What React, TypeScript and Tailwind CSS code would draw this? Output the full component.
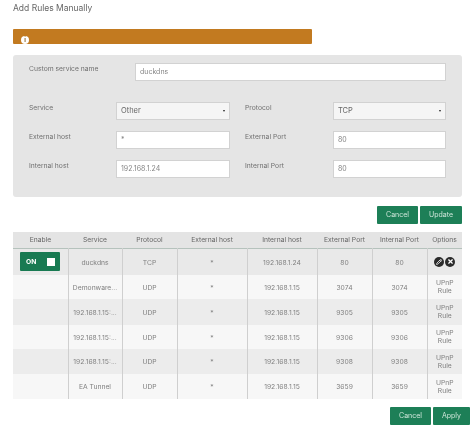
import { Pencil, X } from "lucide-react";

const rows = [
  { service: "duckdns", proto: "TCP", host: "192.168.1.24", ext: "80", int: "80", custom: true, h: "h-[27px]", bg: "bg-[#e9e9e9]" },
  { service: "Demonware...", proto: "UDP", host: "192.168.1.15", ext: "3074", int: "3074", h: "h-[24px]", bg: "bg-[#f7f7f7]" },
  { service: "192.168.1.15:...", proto: "UDP", host: "192.168.1.15", ext: "9305", int: "9305", h: "h-[26px]", bg: "bg-[#ececec]" },
  { service: "192.168.1.15:...", proto: "UDP", host: "192.168.1.15", ext: "9306", int: "9306", h: "h-[24px]", bg: "bg-[#f7f7f7]" },
  { service: "192.168.1.15:...", proto: "UDP", host: "192.168.1.15", ext: "9308", int: "9308", h: "h-[25px]", bg: "bg-[#ececec]" },
  { service: "EA Tunnel", proto: "UDP", host: "192.168.1.15", ext: "3659", int: "3659", h: "h-[25px]", bg: "bg-[#f7f7f7]" },
];

const headers = [
  { label: "Enable", w: "w-[55px]" },
  { label: "Service", w: "w-[54px]" },
  { label: "Protocol", w: "w-[55px]" },
  { label: "External host", w: "w-[70px]" },
  { label: "Internal host", w: "w-[70px]" },
  { label: "External Port", w: "w-[55px]" },
  { label: "Internal Port", w: "w-[55px]" },
  { label: "Options", w: "w-[35px]" },
];

function Field({ value, className }: { value: string; className: string }) {
  return (
    <div className={`h-[18px] flex items-center pl-[4px] bg-white border border-[#d2d2d2] text-[7px] text-[#858585] ${className}`}>
      {value}
    </div>
  );
}

function Select({ value, className }: { value: string; className: string }) {
  return (
    <div className={`h-[18px] flex items-center justify-between px-[4px] bg-[#f5f5f5] border border-[#d2d2d2] text-[7.5px] text-[#666] ${className}`}>
      <span>{value}</span>
      <span className="w-0 h-0 border-x-[1.5px] border-t-[2px] border-x-transparent border-t-[#222]" />
    </div>
  );
}

function Btn({ label, className }: { label: string; className: string }) {
  return (
    <button className={`h-[18px] rounded-[1px] bg-[#1d7f57] text-[7px] text-[#cfe6da] ${className}`}>
      {label}
    </button>
  );
}

const cell = "border-r border-[#cfcfcf] text-center align-middle p-0 pt-[2px]";

export default function App() {
  return (
    <div className="w-[474px] h-[428px] overflow-hidden pl-[13px] pt-[3px] text-[#666] will-change-transform font-['Inter',sans-serif]">
      <h1 className="h-[11px] leading-[11px] text-[8.5px] font-normal text-[#666]">Add Rules Manually</h1>

      <div className="mt-[15px] w-[299px] h-[15px] bg-[#c27a20] rounded-[1px] flex items-end pl-[8px]">
        <div className="w-[8px] h-[8px] rounded-full bg-white flex items-center justify-center text-[6px] font-bold text-[#8a5a18] leading-none">i</div>
      </div>

      <div className="mt-[11px] w-[449px] h-[142px] bg-[#e5e5e5] rounded-[3px] pl-[16px] pr-[16px] pt-[8px] text-[6.75px] text-[#707070]">
        <div className="flex items-center h-[18px]">
          <span className="w-[106px] -mt-[6px]">Custom service name</span>
          <Field value="duckdns" className="w-[311px]" />
        </div>
        <div className="mt-[21px] flex flex-col gap-[11px]">
          <div className="flex items-center">
            <span className="w-[87px] -mt-[5px]">Service</span>
            <Select value="Other" className="w-[114px]" />
            <span className="ml-[15px] w-[88px] -mt-[5px]">Protocol</span>
            <Select value="TCP" className="w-[113px]" />
          </div>
          <div className="flex items-center">
            <span className="w-[87px] -mt-[5px]">External host</span>
            <Field value="*" className="w-[114px]" />
            <span className="ml-[15px] w-[88px] -mt-[5px]">External Port</span>
            <Field value="80" className="w-[113px]" />
          </div>
          <div className="flex items-center">
            <span className="w-[87px] -mt-[6px]">Internal host</span>
            <Field value="192.168.1.24" className="w-[114px]" />
            <span className="ml-[15px] w-[88px] -mt-[6px]">Internal Port</span>
            <Field value="80" className="w-[113px]" />
          </div>
        </div>
      </div>

      <div className="mt-[9px] w-[449px] flex justify-end gap-[2px]">
        <Btn label="Cancel" className="w-[41px]" />
        <Btn label="Update" className="w-[42px]" />
      </div>

      <table className="mt-[8px] w-[449px] table-fixed border-collapse text-[6.75px] text-[#808080]">
        <thead>
          <tr className="h-[16px] bg-[#e4e4e4] border-b border-[#b5c2bc] text-[#666]">
            {headers.map((h) => (
              <th key={h.label} className={`${h.w} font-normal text-center p-0`}>{h.label}</th>
            ))}
          </tr>
        </thead>
        <tbody>
          {rows.map((r, i) => (
            <tr key={i} className={`${r.h} ${r.bg}`}>
              <td className="border-r border-[#cfcfcf] align-middle p-0">
                {r.custom && (
                  <div className="mx-[7px] h-[19px] w-[40px] rounded-[1px] bg-[#187a52] flex items-center justify-between pl-[6px] pr-[5px]">
                    <span className="text-[6.75px] font-bold text-white">ON</span>
                    <span className="w-[8px] h-[8px] bg-white" />
                  </div>
                )}
              </td>
              <td className={cell}>{r.service}</td>
              <td className={cell}>{r.proto}</td>
              <td className={cell}>*</td>
              <td className={cell}>{r.host}</td>
              <td className={cell}>{r.ext}</td>
              <td className={cell}>{r.int}</td>
              <td className="text-center align-middle p-0 leading-[8px]">
                {r.custom ? (
                  <div className="flex justify-center gap-[1px]">
                    <span className="w-[10px] h-[10px] rounded-full bg-[#2b2b2b] flex items-center justify-center">
                      <Pencil size={6} color="#fff" strokeWidth={3} />
                    </span>
                    <span className="w-[10px] h-[10px] rounded-full bg-[#2b2b2b] flex items-center justify-center">
                      <X size={7} color="#fff" strokeWidth={4} />
                    </span>
                  </div>
                ) : (
                  <>UPnP<br />Rule</>
                )}
              </td>
            </tr>
          ))}
        </tbody>
      </table>

      <div className="mt-[8px] w-[457px] flex justify-end gap-[2px]">
        <Btn label="Cancel" className="w-[41px]" />
        <Btn label="Apply" className="w-[37px]" />
      </div>
    </div>
  );
}
